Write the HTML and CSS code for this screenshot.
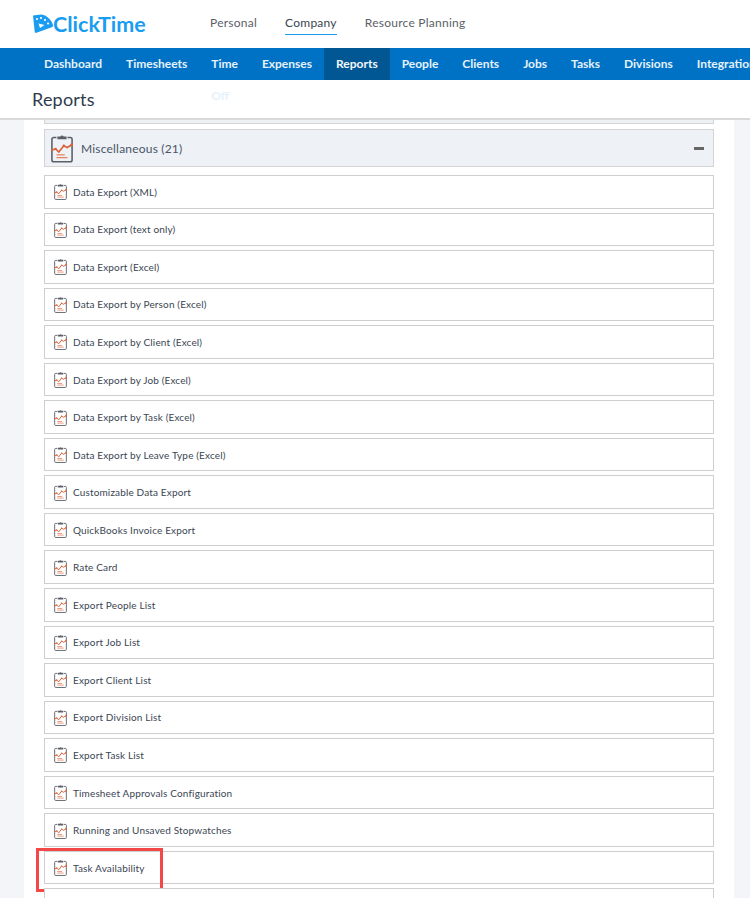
FILE: index.html
```html
<!DOCTYPE html>
<html lang="en">
<head>
<meta charset="utf-8">
<title>Reports</title>
<link rel="stylesheet" href="styles.css">
</head>
<body>
<svg class="defs" width="0" height="0" aria-hidden="true">
  <symbol id="report" viewBox="0 0 24 32">
    <path d="M6 4.5H3a2 2 0 0 0-2 2V29a2 2 0 0 0 2 2h18a2 2 0 0 0 2-2V6.500a2 2 0 0 0-2-2h-3" fill="none" stroke="#5b6068" stroke-width="1.700"/>
    <path d="M7 6.500V3.500h3.200a2 2 0 0 1 3.600 0H17v3z" fill="#5b6068"/>
    <path d="M0 18.500l5-1.500 3.500 3.500L14 13.500l3.500 2L24 12" fill="none" stroke="#d9623b" stroke-width="1.800"/>
    <circle cx="5" cy="17" r="1.300" fill="#d9623b"/><circle cx="14" cy="13.500" r="1.300" fill="#d9623b"/><circle cx="22.500" cy="12.500" r="1.500" fill="#d9623b"/>
    <path d="M6 23.500h9M6 26.500h12" stroke="#e5825f" stroke-width="1.500"/>
  </symbol>
</svg>
<header class="top">
  <a class="logo">
    <svg class="logo-mark" viewBox="0 0 22 20" aria-hidden="true">
      <path d="M1 1.500 9.500.5c5 .6 9.800 5 11.500 10.500.3 1.300-.2 2-1.300 2.200L4.500 18.800c-1 .3-1.700-.2-1.800-1.200z" fill="#1a9cf0"/>
      <g fill="#fff"><circle cx="5" cy="5" r="1.100"/><circle cx="9" cy="4" r="1.100"/><circle cx="13" cy="6" r="1.100"/><circle cx="16" cy="9.500" r="1.100"/><path d="M6.500 9.500 12.500 11 8 14z"/></g>
    </svg>
    <span class="logo-text">ClickTime</span>
  </a>
  <nav class="tabs">
    <a class="tab">Personal</a>
    <a class="tab tab-active">Company</a>
    <a class="tab">Resource Planning</a>
  </nav>
</header>
<nav class="mainnav">
  <a class="nav-item">Dashboard</a>
  <a class="nav-item">Timesheets</a>
  <a class="nav-item">Time Off</a>
  <a class="nav-item">Expenses</a>
  <a class="nav-item nav-active">Reports</a>
  <a class="nav-item">People</a>
  <a class="nav-item">Clients</a>
  <a class="nav-item">Jobs</a>
  <a class="nav-item">Tasks</a>
  <a class="nav-item">Divisions</a>
  <a class="nav-item">Integration</a>
</nav>
<div class="titlebar"><h1 class="title">Reports</h1></div>
<main class="content">
  <div class="panel">
    <div class="prev-row"></div>
    <section class="group-head">
      <svg class="group-icon"><use href="#report"/></svg>
      <span class="group-label">Miscellaneous (21)</span>
      <span class="collapse"></span>
    </section>
    <ul class="list">
      <li class="row"><svg class="row-icon"><use href="#report"/></svg>Data Export (XML)</li>
      <li class="row"><svg class="row-icon"><use href="#report"/></svg>Data Export (text only)</li>
      <li class="row"><svg class="row-icon"><use href="#report"/></svg>Data Export (Excel)</li>
      <li class="row"><svg class="row-icon"><use href="#report"/></svg>Data Export by Person (Excel)</li>
      <li class="row"><svg class="row-icon"><use href="#report"/></svg>Data Export by Client (Excel)</li>
      <li class="row"><svg class="row-icon"><use href="#report"/></svg>Data Export by Job (Excel)</li>
      <li class="row"><svg class="row-icon"><use href="#report"/></svg>Data Export by Task (Excel)</li>
      <li class="row"><svg class="row-icon"><use href="#report"/></svg>Data Export by Leave Type (Excel)</li>
      <li class="row"><svg class="row-icon"><use href="#report"/></svg>Customizable Data Export</li>
      <li class="row"><svg class="row-icon"><use href="#report"/></svg>QuickBooks Invoice Export</li>
      <li class="row"><svg class="row-icon"><use href="#report"/></svg>Rate Card</li>
      <li class="row"><svg class="row-icon"><use href="#report"/></svg>Export People List</li>
      <li class="row"><svg class="row-icon"><use href="#report"/></svg>Export Job List</li>
      <li class="row"><svg class="row-icon"><use href="#report"/></svg>Export Client List</li>
      <li class="row"><svg class="row-icon"><use href="#report"/></svg>Export Division List</li>
      <li class="row"><svg class="row-icon"><use href="#report"/></svg>Export Task List</li>
      <li class="row"><svg class="row-icon"><use href="#report"/></svg>Timesheet Approvals Configuration</li>
      <li class="row"><svg class="row-icon"><use href="#report"/></svg>Running and Unsaved Stopwatches</li>
      <li class="row row-marked"><svg class="row-icon"><use href="#report"/></svg>Task Availability<span class="highlight"></span></li>
      <li class="row"></li>
    </ul>
  </div>
</main>
</body>
</html>
```
FILE: styles.css
```css
* { box-sizing: border-box; }
html, body { margin: 0; height: 100%; overflow: hidden; }
body { font-family: Lato, "Liberation Sans", sans-serif; background: #fff; color: #2f3b4c; }
.defs { position: absolute; }
a { color: inherit; text-decoration: none; }

.top { height: 48px; display: flex; align-items: flex-start; padding-left: 32px; }
.logo { display: flex; align-items: center; height: 20px; margin-top: 14px; width: 178px; }
.logo-mark { width: 22px; height: 20px; flex: none; }
.logo-text { font-size: 21.500px; font-weight: 700; color: #1a9cf0; line-height: 20px; margin-left: -1px; }
.tabs { display: flex; gap: 28px; }
.tab { font-size: 12px; line-height: 16px; padding-top: 15px; height: 35px; color: #5b6068; letter-spacing: .25px; }
.tab-active { color: #3a4450; border-bottom: 1px solid #1a9cf0; }

.mainnav { height: 32px; background: #0072c6; display: flex; padding-left: 32px; }
.nav-item { padding: 0 12px; font-size: 12px; line-height: 32px; font-weight: 700; color: #e6f1fa; }
.nav-active { background: #005793; color: #f4f8fb; }

.titlebar { height: 40px; padding-left: 32px; border-bottom: 2px solid #d9d9d9; }
.title { margin: 0; font-size: 18px; font-weight: 400; line-height: 39px; color: #2f3b4c; letter-spacing: .2px; }

.content { background: #f4f5f8; padding: 0 16px 0 24px; height: 778px; overflow: hidden; }
.panel { background: #fff; height: 100%; padding: 0 20px; }
.prev-row { height: 4px; background: #eef1f4; border: 2px solid #d4d4d4; border-top: 0; border-width: 0 1px 1px; margin-bottom: 5px; }
.group-head { height: 38px; display: flex; align-items: center; background: #eef1f5; border: 1px solid #d4d4d4; padding-left: 6px; margin-bottom: 8px; }
.group-icon { width: 22px; height: 30px; flex: none; }
.group-label { font-size: 12px; color: #4a5568; margin-left: 8px; letter-spacing: .2px; }
.collapse { margin-left: auto; margin-right: 9px; width: 10px; height: 3px; background: #666; }

.list { list-style: none; margin: 0; padding: 0; display: flex; flex-direction: column; gap: 4px; }
.row { position: relative; height: 33.560px; flex: none; display: flex; align-items: center; border: 1px solid #cfcfcf; background: #fff; padding-left: 9px; font-size: 10px; color: #3a4552; letter-spacing: .15px; }
.row-icon { width: 13px; height: 17px; flex: none; margin-right: 6px; }
.highlight { position: absolute; left: -9px; top: -4px; width: 127px; height: 44px; border: 3px solid #f44848; }
```
